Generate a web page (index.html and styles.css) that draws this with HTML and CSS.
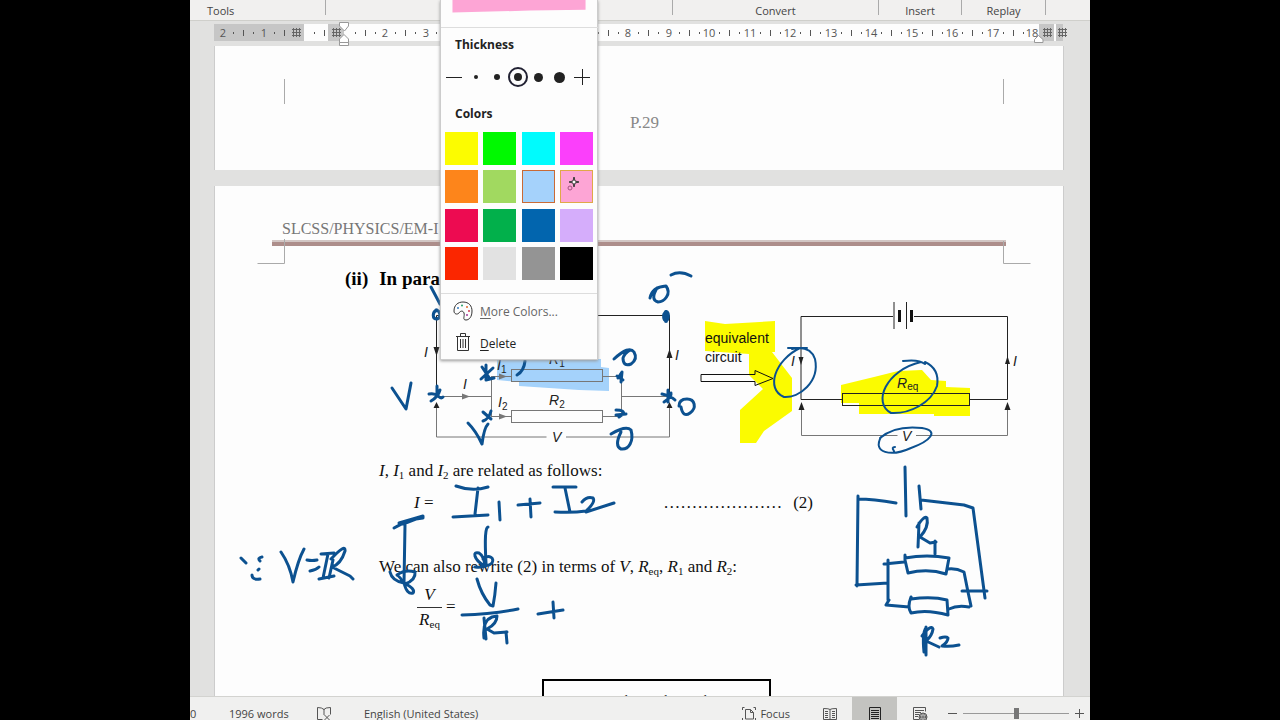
FILE: index.html
```html
<!DOCTYPE html>
<html lang="en">
<head>
  <meta charset="UTF-8">
  <meta name="viewport" content="width=device-width, initial-scale=1.0">
  <title>Physics notes - Parallel circuits</title>
  <link rel="stylesheet" href="styles.css">
</head>
<body>
  <div class="window">
    <div class="ribbon">
      <div class="group tools">Tools</div>
      <div class="group pens"></div>
      <div class="group convert">Convert</div>
      <div class="group insert">Insert</div>
      <div class="group replay">Replay</div>
    </div>

    <div class="ruler">
      <svg id="ruler" viewBox="214 24 849 22" width="849" height="22" aria-hidden="true">
        <rect x="214" y="24" width="849" height="17" fill="#fdfdfd"/>
        <path fill="#c6c6c6" d="M214 24h90v17h-90zM328 24h16v17h-16zM1039 24h15v17h-15zM1056 24h7v17h-7z"/>
        <g id="ticks"></g>
        <path stroke="#666" fill="none" d="M293.500 28v9M296.500 28v9M299.500 28v9M292 29.500h9M292 32.500h9M292 35.500h9M333.500 28v9M336.500 28v9M339.500 28v9M332 29.500h9M332 32.500h9M332 35.500h9M1044.500 28v9M1047.500 28v9M1050.500 28v9M1043 29.500h9M1043 32.500h9M1043 35.500h9M1059.500 28v9M1062.500 28v9M1065.500 28v9M1058 29.500h9M1058 32.500h9M1058 35.500h9"/>
        <path fill="#fff" stroke="#999" d="M339.500 22.500h9v3.500l-4 5l-5-5zM339.500 42.500v-3.500l4.500-4.500l4.500 4.500v3.500zM339.500 42.500h9v3h-9zM1034.500 42.500v-3l4-4l4.500 4v3z"/>
      </svg>
    </div>

    <main class="document">
      <section class="page page-prev">
        <svg class="marks" viewBox="214 46 849 124" width="849" height="124" aria-hidden="true">
          <path d="M284.500 79v25M1003.500 79v25"/>
        </svg>
        <p class="page-number">P.29</p>
      </section>

      <section class="page page-current">
        <header class="page-header">SLCSS/PHYSICS/EM-I</header>
        <h2><span>(ii)</span><span>In parallel</span></h2>

        <svg class="figure" viewBox="214 291 849 168" width="849" height="168" role="img" aria-label="Parallel resistors and their equivalent circuit">
          <!-- highlighter -->
          <path fill="#a4d2fb" d="M497 359h104v8l8 1v23l-30-1-60-4v-4l-22-2z"/>
          <path fill="#fbfb00" d="M705 321l20 3 50-3v31h-3l20 26v33l-28 20-8 12h-16v-33l23-21-14-14v-21l-44-3z"/>
          <path fill="#fbfb00" d="M841 385l33-8 24-6 24-1 9 10 15 1v6l24 1v28h-36v-2h-75v-11h-18z"/>

          <!-- two resistors in parallel -->
          <g class="wire">
            <path d="M436.500 397v-81.500h233v81"/>
            <path class="thin" d="M436 396.500h55M491.500 376v40M491 376.500h20M491 416.500h20M603 376.500h18M603 416.500h18M621.500 376v40M621 396.500h48"/>
            <path class="thin" d="M436.500 405v32h110M566 437h103.500v-32"/>
            <rect class="thin" x="511.500" y="369.500" width="91" height="12"/>
            <rect class="thin" x="511.500" y="410.500" width="91" height="12"/>
          </g>
          <path class="head" d="M433.500 347h6l-3 9zM666.500 358h6l-3-9zM433.500 408h6l-3-6zM666.500 408h6l-3-6z"/>
          <path class="head gray" d="M462 393.500v6l8-3zM499 373.500v6l8-3zM499 413.500v6l8-3z"/>
          <g class="label">
            <text x="424" y="357">I</text>
            <text x="463" y="389">I</text>
            <text x="675" y="360">I</text>
            <text x="497" y="370">I<tspan class="sub" dy="3">1</tspan></text>
            <text x="498" y="407">I<tspan class="sub" dy="3">2</tspan></text>
            <text x="549" y="364">R<tspan class="sub" dy="3">1</tspan></text>
            <text x="549" y="405">R<tspan class="sub" dy="3">2</tspan></text>
            <text x="552" y="442">V</text>
          </g>

          <!-- block arrow -->
          <g class="caption">
            <text x="705" y="343">equivalent</text>
            <text x="705" y="362">circuit</text>
          </g>
          <path class="block-arrow" d="M701 374.500h54v-4l18 8-18 7v-4h-54z"/>

          <!-- equivalent circuit -->
          <g class="wire">
            <path d="M893 316.500h-92v83h41M914 316.500h93.500v83h-38M894 302v27M906.500 302v27"/>
            <path class="thin" d="M801.500 406v29.500h96M916 435.500h91.500v-29.500"/>
            <rect x="842.500" y="393.500" width="127" height="12"/>
          </g>
          <path stroke="#111" stroke-width="3" d="M899.500 310v12M911.500 310v12"/>
          <path class="head" d="M798.500 357h5l-2.500 8zM1005 364h5l-2.500-8zM798.500 410h6l-3-8zM1004.500 410h6l-3-8z"/>
          <g class="label">
            <text x="791" y="366">I</text>
            <text x="1013" y="366">I</text>
            <text x="897" y="388">R<tspan class="sub" dy="2">eq</tspan></text>
            <text x="902" y="441">V</text>
          </g>
        </svg>

        <p><i>I</i>, <i>I</i><sub>1</sub> and <i>I</i><sub>2</sub> are related as follows:</p>
        <p class="equation"><span><i>I</i> =</span><span class="leader">…………………</span><span>(2)</span></p>
        <p class="rewrite">We can also rewrite (2) in terms of <i>V</i>, <i>R</i><sub>eq</sub>, <i>R</i><sub>1</sub> and <i>R</i><sub>2</sub>:</p>
        <div class="formula">
          <span class="fraction"><i>V</i><span class="denominator"><i>R</i><sub>eq</sub></span></span>
          <span>=</span>
        </div>
        <div class="result"><span>1</span><span>1</span><span>1</span></div>

        <svg class="marks" viewBox="214 186 849 510" width="849" height="510" aria-hidden="true">
          <path d="M284.500 239v24.500h-27M1003.500 241v22.500h27"/>
        </svg>

        <!-- handwriting -->
        <svg class="ink" viewBox="214 186 849 510" width="849" height="510" aria-hidden="true">
          <!-- V and 0 at the corners -->
          <path d="M431 287l9 17M437 310c-5 2-5 9 0 9c4-1 4-8-1-9"/>
          <path d="M392 388l14 21 5-26M429 394q6-1 9 2t5 1M431 401q7-4 9-11M437 386v10"/>
          <path d="M482 367l8 12M481 379l12-11M486 365v15l8-2M483 412l8 7M483 421q6-2 8-10M468 423q8 8 14 21 2-16 6-20"/>
          <path d="M525 361q-1 10-8 14"/>
          <path d="M650 298q2-11 16-12c6 8-2 16-8 16q-8-2-1-14M671 275q9-5 20 1"/>
          <path d="M666 312c-3 3-2 8 0 8s3-7 0-8v9" stroke-width="4"/>
          <path d="M614 359q15-14 20-7 4 7-3 12-8 3-8-6 1-4 7-8"/>
          <path d="M618 378l4-6-1 10M617 376l6 4M616 410q9 0 7 4l-4 3M616 415l10-1"/>
          <path d="M662 394q9 2 13 6M664 402q8-5 7-9M668 390v12"/>
          <path d="M681 407q2 11 9 6c7-5 5-14-3-14q-8 0-8 7"/>
          <path d="M611 434q15-9 20-4c3 11-2 20-10 19q-7-3 0-17"/>

          <!-- rings round the equivalent circuit -->
          <path stroke-width="2" d="M788 348h19M792 349q18-4 23 10c5 23-16 39-31 38-19-8-9-37 16-49M903 361q16-2 22 3M925 362q15 7 12 24c-6 17-27 28-46 27-19-10-5-43 30-51M880 438q15-13 42-10c18 3 8 13-11 20-20 9-39 5-30-11M894 451q-3-4 1-4"/>

          <!-- I1 + I2 -->
          <path d="M456 486q16 6 32 1M478 488l-3 26M453 517l35-2M499 502l1 18M518 505l22-2M530 499l1 18M553 487h23M565 488l5 24M555 512q18 1 31-1 10-9 7-13-6-2-11 4M586 512l28-9"/>

          <!-- arrows down -->
          <path d="M394 528q15-9 29-10v-2l-24 7 22-6-18 7M405 525l-1 58"/>
          <path d="M390 572q2 9 14 11M397 575q8-6 18-3 1 8-10 12-6-8-8-9M404 583q12 6 9 10-6 2-9-10"/>
          <path d="M488 527q-4 0-2 36M483 565c-9-6-11-14-4-12q5 3 6 13M483 559c6-5 12-1 9 4q-4 4-9 2M475 567q8 1 13-2"/>

          <!-- V = IR -->
          <path d="M241 558l5 5M262 557q-5 1-2 4M259 569l-1 1M252 575q0 5 8 4M281 552q9 13 12 30 5-22 11-33M307 560q5 1 10 0M310 571q6-1 9-4M321 554l13-1M328 554l-5 24M319 579l15-3M333 560l-4 18M331 559q15-16 14-8-4 13-13 16l18 9 3 3"/>

          <!-- V / R1 + -->
          <path d="M477 579q4 15 13 26l3 1q2-10 3-23M462 615q31-1 56-6M484 618l2 21M484 638q-2-17 8-21l5-1q0 8-10 13l7 4 13-1M506 632l1 11M538 614l25-4M553 602l1 16"/>

          <!-- redrawn circuit -->
          <path d="M858 496l-1 90M858 499q15 0 38 4M905 467l1 49M919 486l2 23M921 500l43 5 9 3 12 90M856 585l32-2M888 560v40M884 564l20-2M905 555v5l3 13q20-5 38 1l3-16q-22-4-44 0M948 569q8-1 16 3l4 20 3 14M962 591h25M889 600l-3 5 23 2M911 597q-4 10 0 16 16-4 37 2l-1-15q-15-4-36-1M949 609q8-4 20-2"/>
          <path d="M919 523l-1 24M917 527q7-12 10-9 2 9-7 19l10 6 6-1M935 541v13M926 627v28M924 652q-2-19 2-24M922 636q9-12 11-7-1 7-7 12l13 6M940 638q6-2 8 0 0 4-6 8 8 1 17-1"/>
        </svg>
      </section>
    </main>

    <footer class="status">
      <span class="page-count">0</span>
      <span class="words">1996 words</span>
      <svg class="proof" viewBox="0 0 16 16" width="16" height="16" aria-hidden="true"><path d="M8 3.500Q6 1.500 1.500 1.500v12h5M8 3.500q1-2 6.500-2v7M8 3v6M8.500 9l5 5M13.500 9l-5 5"/></svg>
      <span>English (United States)</span>

      <div class="views">
        <button type="button" class="focus">
          <svg viewBox="0 0 16 16" width="16" height="16" aria-hidden="true"><path d="M1.500 4v-2.500h2M12.500 1.500h2v2.500M1.500 12v2.500h2M12.500 14.500h2v-2.500M4.500 3.500h5l3 3v6.500h-8zM9.500 3.500v3h3"/></svg>
          Focus
        </button>
        <button type="button" class="view" aria-label="Read mode">
          <svg viewBox="0 0 16 16" width="16" height="16" aria-hidden="true"><path d="M8 3.500q-1-1-6.500-1v11h13v-11q-5.500 0-6.500 1v10M3 5.500h3M3 7.500h3M3 9.500h3M3 11.500h3M10 5.500h3M10 7.500h3M10 9.500h3M10 11.500h3"/></svg>
        </button>
        <button type="button" class="view active" aria-label="Print layout">
          <svg viewBox="0 0 16 16" width="16" height="16" aria-hidden="true"><path d="M2.500 1.500h11v14h-11zM4 4.500h8M4 6.500h8M4 8.500h8M4 10.500h8M4 12.500h8"/></svg>
        </button>
        <button type="button" class="view" aria-label="Web layout">
          <svg viewBox="0 0 16 16" width="16" height="16" aria-hidden="true"><path d="M7 13.500h-5.500v-12h12v4M3 4.500h9M3 6.500h6M3 8.500h4M3 10.500h3M15 11a4 4 0 1 1-8 0a4 4 0 1 1 8 0M7 11h8M11 7v8M9.500 7.500q-2 3 0 7M12.500 7.500q2 3 0 7"/></svg>
        </button>
        <button type="button" class="step" aria-label="Zoom out"><svg viewBox="0 0 9 9" width="9" height="9"><path d="M0 4.500h9"/></svg></button>
        <input type="range" min="0" max="100" value="50" aria-label="Zoom">
        <button type="button" class="step" aria-label="Zoom in"><svg viewBox="0 0 9 9" width="9" height="9"><path d="M0 4.500h9M4.500 0v9"/></svg></button>
      </div>
    </footer>

    <div class="pen-menu">
      <svg class="preview" viewBox="0 0 157 28" width="157" height="28" aria-hidden="true"><path fill="#fda5d5" d="M9 0h138v10l-58 1-80 2z"/></svg>
      <h3>Thickness</h3>
      <div class="thickness">
        <button type="button" class="end" aria-label="Thinner"><svg viewBox="0 0 16 16" width="16" height="16"><path d="M0 8.500h16"/></svg></button>
        <button type="button" aria-label="Size 1"><span class="dot d1"></span></button>
        <button type="button" aria-label="Size 2"><span class="dot d2"></span></button>
        <button type="button" aria-label="Size 3"><span class="dot d3"></span></button>
        <button type="button" aria-label="Size 4"><span class="dot d4"></span></button>
        <button type="button" aria-label="Size 5"><span class="dot d5"></span></button>
        <button type="button" class="end" aria-label="Thicker"><svg viewBox="0 0 16 16" width="16" height="16"><path d="M0 8.500h16M8.500 0v16"/></svg></button>
      </div>
      <h3>Colors</h3>
      <div class="colors">
        <button type="button" class="yellow" aria-label="Yellow"></button>
        <button type="button" class="green" aria-label="Green"></button>
        <button type="button" class="aqua" aria-label="Aqua"></button>
        <button type="button" class="magenta" aria-label="Magenta"></button>
        <button type="button" class="orange" aria-label="Orange"></button>
        <button type="button" class="lime" aria-label="Lime"></button>
        <button type="button" class="sky current" aria-label="Light blue"></button>
        <button type="button" class="pink hovered" aria-label="Pink">
          <svg viewBox="0 0 16 16" width="16" height="16"><path fill="#fff" stroke="#333" d="M10 1l1 4 4 1-4 1-1 4-1-4-4-1 4-1z"/><circle cx="6" cy="12" r="2" fill="none" stroke="#a55080"/></svg>
        </button>
        <button type="button" class="crimson" aria-label="Crimson"></button>
        <button type="button" class="emerald" aria-label="Emerald"></button>
        <button type="button" class="blue" aria-label="Blue"></button>
        <button type="button" class="lavender" aria-label="Lavender"></button>
        <button type="button" class="red" aria-label="Red"></button>
        <button type="button" class="silver" aria-label="Silver"></button>
        <button type="button" class="gray" aria-label="Gray"></button>
        <button type="button" class="black" aria-label="Black"></button>
      </div>
      <div class="commands">
        <button type="button" class="more">
          <svg viewBox="0 0 20 20" width="20" height="20" aria-hidden="true">
            <path d="M1 10C1 4 5 1 10 1c6 0 9 4 9 9 0 6-3 9-6 9-4 0-1-4-2-7-1-3-4-2-5 0-2 2-5 1-5-2z"/>
            <g stroke="none"><circle cx="5" cy="7" r="1" fill="#347bc0"/><circle cx="9" cy="4.500" r="1" fill="#26a269"/><circle cx="14" cy="6" r="1" fill="#e06c2c"/><circle cx="16" cy="10" r="1" fill="#d0344c"/><circle cx="14" cy="14" r="1" fill="#a3389c"/></g>
          </svg>
          <span><u>M</u>ore Colors...</span>
        </button>
        <button type="button">
          <svg viewBox="0 0 20 20" width="20" height="20" aria-hidden="true"><path d="M3 3.500h14M7.500 3v-2.500h5v2.500M4.500 3.500v14h11v-14M7.500 6v9M10 6v9M12.500 6v9"/></svg>
          <span><u>D</u>elete</span>
        </button>
      </div>
    </div>
  </div>

  <script>
    // ruler: one unit is 40.5px, zero sits at x = 304
    const unit = 40.5;
    let marks = '';
    for (let q = -8; q <= 71; q++) {
      const x = Math.round(304 + q * unit / 4);
      const n = Math.abs(q / 4);
      // the open menu covers this stretch
      if (x > 440 && x < 598) continue;
      if (q % 4 === 0) {
        if (n > 0 && q !== 4) marks += `<text x="${x}" y="37">${n}</text>`;
      } else if (x > 214 && (x < 288 || x > 306) && (x < 328 || x > 346)) {
        const h = q % 2 === 0 ? 6 : 2;
        marks += `<rect x="${x}" y="${33 - h / 2}" width="1" height="${h}"/>`;
      }
    }
    marks += '<text x="1032" y="37">18</text>';
    document.getElementById('ticks').innerHTML = marks;
  </script>
</body>
</html>
```
FILE: styles.css
```css
* { box-sizing: border-box; }
body { margin: 0; background: #000; font-family: "Open Sans", "Noto Sans", sans-serif; font-size: 11px; color: #444; }
button { padding: 0; border: 0; background: none; font: inherit; color: inherit; display: flex; align-items: center; justify-content: center; }
svg { display: block; flex: none; }

.window { position: relative; display: flex; flex-direction: column; max-width: 900px; height: 100vh; margin: 0 auto; background: #e1e1e0; overflow: hidden; }

.ribbon { display: flex; height: 21px; background: #f1f0ef; border-bottom: 1px solid #cfcfcb; }
.group { height: 15px; border-right: 1px solid #aaa; text-align: center; line-height: 22px; }
.tools { width: 136px; padding-left: 17px; text-align: left; }
.pens { width: 347px; }
.convert { width: 206px; }
.insert { width: 83px; }
.replay { width: 84px; }

.ruler { padding: 3px 24px 0; }
.ruler svg { overflow: visible; }
#ticks { fill: #555; font-size: 11px; text-anchor: middle; }

.document { flex: 1; min-height: 0; overflow: hidden; padding: 0 26px 0 24px; font-family: "Liberation Serif", serif; }
.page { position: relative; background: #fdfdfd; border: solid #ccc; border-width: 0 1px; }
.page-prev { height: 124px; padding-top: 64px; margin-bottom: 16px; }
.page-number { padding-left: 11px; text-align: center; font-size: 17px; line-height: 25px; color: #888; }
.marks, .ink { position: absolute; top: 0; left: -1px; fill: none; }
.figure { margin-left: -1px; }
.marks { stroke: #aaa; }
.ink { stroke: #0c5190; stroke-width: 3; stroke-linecap: round; stroke-linejoin: round; }

.page-current { padding-top: 31px; color: #111; font-size: 17px; line-height: 24px; }
.page-header { margin: 0 57px; padding-left: 10px; height: 29px; font-size: 16px; line-height: 24px; color: #777; border-bottom: 4px solid #ad8e8b; box-shadow: inset 0 -2px #d2c6c4; }
h2 { display: flex; gap: 11px; margin: 21px 0 0 130px; font-size: 19px; line-height: 24px; color: #000; }
.page p { margin: 0; }
.page-current p { padding-left: 164px; }
.page-current .equation { display: flex; margin-top: 8px; padding-left: 199px; }
.equation .leader { margin-left: auto; padding-right: 11px; }
.equation span:last-child { padding-right: 250px; }
.page-current .rewrite { margin-top: 40px; }
sub { font-size: 11px; line-height: 0; vertical-align: -3px; }
.formula { display: flex; align-items: center; gap: 4px; margin: 3px 0 0 202px; height: 50px; }
.fraction { display: flex; flex-direction: column; width: 25px; text-align: center; }
.denominator { border-top: 1px solid #333; }
.result { display: flex; justify-content: center; gap: 31px; width: 229px; margin: 47px 0 0 327px; padding: 8px 0 20px 18px; border: 2px solid #000; }

.wire { fill: none; stroke: #222; }
.thin { stroke: #777; }
.head { fill: #222; }
.head.gray { fill: #777; }
.label { font: italic 14px "Liberation Sans", sans-serif; fill: #222; }
.label .sub { font-size: 10px; font-style: normal; }
.caption { font: 14px "Liberation Sans", sans-serif; fill: #111; }
.block-arrow { fill: none; stroke: #111; }

.status { display: flex; align-items: center; height: 24px; padding: 10px 6px 0 0; background: #f0f0ef; border-top: 1px solid #d3d3d0; white-space: nowrap; }
.status svg { fill: none; stroke: #555; }
.page-count { width: 39px; }
.words { width: 87px; }
.proof { margin-right: 32px; }
.views { display: flex; align-items: center; margin-left: auto; }
.focus { gap: 3px; margin-right: 17px; }
.view { width: 45px; height: 23px; margin-top: -10px; padding-top: 10px; }
.active { background: #c3c3c0; }
.status .active svg { stroke: #222; }
.step { width: 9px; height: 9px; }
.view + .step { margin-left: 6px; }
input[type="range"] { appearance: none; width: 106px; height: 11px; margin: 0 6px; background: linear-gradient(#999, #999) center / 100% 1px no-repeat; }
input[type="range"]::-webkit-slider-thumb { appearance: none; width: 5px; height: 11px; background: #777; }

.pen-menu { position: absolute; top: 0; left: 250px; width: 158px; height: 360px; background: #fdfdfd; border: solid #ccc; border-width: 0 1px 1px; box-shadow: 0 1px 3px #999; color: #222; }
.pen-menu h3 { margin: 0; padding-left: 14px; font-size: 12px; line-height: 20px; }
.preview { border-bottom: 1px solid #ddd; }
.preview + h3 { margin-top: 7px; }
.thickness { display: flex; height: 24px; margin: 10px 2px 15px 1px; }
.thickness button { width: 21px; }
.thickness .end { width: 23px; }
.thickness svg { fill: none; stroke: #222; }
.dot { border-radius: 50%; background: #222; }
.d1 { width: 4px; height: 4px; }
.d2 { width: 6px; height: 6px; }
.d3 { width: 8px; height: 8px; outline: 2px solid #223; outline-offset: 4px; }
.d4 { width: 9px; height: 9px; }
.d5 { width: 11px; height: 11px; }
.colors { display: grid; grid-template: repeat(4, 33px) / repeat(4, 33px); place-content: space-between; height: 148px; margin: 8px 4px 13px; }
.yellow { background: #fcfc00; }
.green { background: #00f900; }
.aqua { background: #00fbfd; }
.magenta { background: #fb3ffb; }
.orange { background: #fd851b; }
.lime { background: #a1d960; }
.sky { background: #a5d2fb; }
.pink { background: #fda5d5; }
.crimson { background: #ed0b51; }
.emerald { background: #02b04b; }
.blue { background: #0265ae; }
.lavender { background: #d5adfb; }
.red { background: #fb2600; }
.silver { background: #e2e2e2; }
.gray { background: #949494; }
.black { background: #000; }
.colors .current { border: 1px solid #c96a35; }
.colors .hovered { border: 1px solid #e0a848; padding: 0 9px 6px 0; }
.commands { padding-top: 1px; border-top: 1px solid #ddd; font-size: 12px; }
.commands button { gap: 7px; width: 100%; height: 32px; padding-left: 12px; justify-content: flex-start; }
.commands svg { fill: none; stroke: #333; }
.commands u { text-underline-offset: 2px; }
.more { color: #666; }
```
